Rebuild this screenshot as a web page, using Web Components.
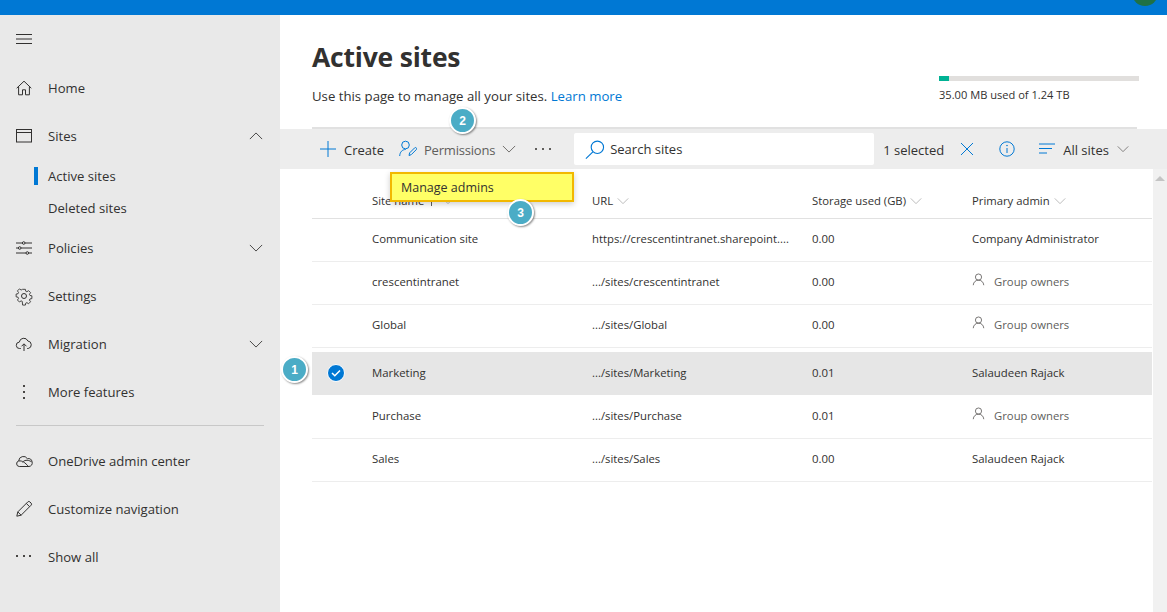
<!DOCTYPE html>
<html lang="en">
<head>
<meta charset="utf-8">
<title>Active sites</title>
<style>
  html, body { margin: 0; height: 100%; overflow: hidden; }
  body { font-family: "Open Sans", "Liberation Sans", sans-serif; color: #323130; background: #fff; }
</style>
</head>
<body>
<sp-shell>
  <sp-nav slot="nav"></sp-nav>
  <sp-header slot="main"></sp-header>
  <sp-toolbar slot="main"></sp-toolbar>
  <sp-table slot="main"></sp-table>
</sp-shell>

<script>
// stroke icons, all on a 16 box
const ICONS = {
  menu: '<path d="M0 3.500h16M0 8h16M0 12.500h16"/>',
  home: '<path d="M.7 8.200 8 1.200l7.300 7M2.600 6.600v8.200h3.900v-5h3v5h3.900V6.600"/>',
  sites: '<rect x=".5" y="1.500" width="15" height="12.500"/><path d="M.5 4.500h15"/>',
  policies: '<path d="M0 3h6.500M9 3h7M0 8h2.500M5 8h11M0 13h10M12.500 13H16"/><circle cx="7.700" cy="3" r="1.300"/><circle cx="3.700" cy="8" r="1.300"/><circle cx="11.300" cy="13" r="1.300"/>',
  settings: '<circle cx="8" cy="8" r="2.500"/><path d="M6.400.6h3.200l.4 2.200 1.300.6 1.900-1.300 2.300 2.300-1.300 1.900.6 1.300 2.200.4v3.200l-2.200.4-.6 1.300 1.300 1.900-2.300 2.300-1.900-1.300-1.300.6-.4 2.200H6.400L6 14.400l-1.300-.6-1.900 1.300L.5 12.800l1.300-1.900-.6-1.300L-1 9.200V6l2.200-.4.600-1.300L.5 2.400 2.800.1l1.900 1.300L6 .8z" transform="translate(1 .8) scale(.875)"/>',
  migration: '<path d="M4.800 12.500H3.700a3.200 3.200 0 0 1-.4-6.400A4.500 4.500 0 0 1 11.900 5a3.800 3.800 0 0 1 .3 7.500h-1M8 15V8M5.500 10.300 8 7.800l2.500 2.500"/>',
  onedrive: '<path d="M3.300 13.500a2.800 2.800 0 0 1-.6-5.500A4.700 4.700 0 0 1 11.400 5.700a3.900 3.900 0 0 1 1.600 7.800zM2.700 8c3.700-.6 6.300 1.600 9.800 5.500M6.500 9.300c2-2.200 4.300-2.900 9-.7"/>',
  pencil: '<path d="M.8 15.200l1-4.300L11.800.9a1.500 1.500 0 0 1 2.100 0l1.200 1.200a1.500 1.500 0 0 1 0 2.100L5.100 14.200zM1.800 10.900l3.300 3.300M10.300 2.400l3.300 3.300"/>',
  plus: '<path d="M8 0v16M0 8h16"/>',
  close: '<path d="M1 2l12 12M13 2 1 14"/>',
  search: '<circle cx="11" cy="6.500" r="5.500"/><path d="M7 10.500.8 16.500"/>',
  info: '<circle cx="8" cy="8" r="7.200"/><path d="M8 7v5"/><circle cx="8" cy="4.600" r=".4"/>',
  lines: '<path d="M0 3h16M0 7.500h13M0 12h8"/>',
  person: '<circle cx="8" cy="5" r="3.800"/><path d="M1.500 15c.3-3.800 3-6.200 6.500-6.200s6.200 2.400 6.500 6.200"/>',
  chevdown: '<path d="M1 4.500 8 11.500l7-7"/>',
  chevup: '<path d="M1 11.500 8 4.500l7 7"/>'
};

// <sp-icon name size color>
class SpIcon extends HTMLElement {
  connectedCallback() {
    const size = this.getAttribute("size") || 16;
    const color = this.getAttribute("color") || "#323130";
    const sw = this.getAttribute("sw") || 1;
    this.attachShadow({ mode: "open" }).innerHTML = `
      <style>:host{display:inline-flex;flex:none;width:${size}px;height:${size}px}svg{display:block;overflow:visible}</style>
      <svg width="${size}" height="${size}" viewBox="0 0 16 16" fill="none" stroke="${color}" stroke-width="${sw}">${ICONS[this.getAttribute("name")] || ""}</svg>`;
  }
}
customElements.define("sp-icon", SpIcon);

// numbered callout laid over the screenshot
class SpBadge extends HTMLElement {
  constructor() {
    super();
    this.attachShadow({ mode: "open" }).innerHTML = `
      <style>
        :host{position:absolute;z-index:5;width:23px;height:23px;box-sizing:content-box;border:2px solid #fff;border-radius:50%;
          background:#4bacc6;box-shadow:1px 1px 2px rgba(0,0,0,.45);color:#fff;display:flex;align-items:center;justify-content:center;
          font:bold 12px "Liberation Sans",sans-serif}
      </style><slot></slot>`;
  }
}
customElements.define("sp-badge", SpBadge);

class SpShell extends HTMLElement {
  constructor() {
    super();
    this.attachShadow({ mode: "open" }).innerHTML = `
      <style>
        :host{display:grid;grid-template-columns:280px 1fr;grid-template-rows:15px 1fr;height:612px;width:1167px;position:relative;overflow:hidden}
        .top{grid-column:1 / 3;background:#0078d4;position:relative}
        .avatar{position:absolute;left:1132px;top:-20px;width:26px;height:26px;border-radius:50%;background:#1f7145}
        .main{display:flex;flex-direction:column;min-width:0}
      </style>
      <div class="top"><div class="avatar"></div></div>
      <slot name="nav"></slot>
      <div class="main"><slot name="main"></slot></div>`;
  }
}
customElements.define("sp-shell", SpShell);

class SpNavItem extends HTMLElement {
  connectedCallback() {
    const icon = this.getAttribute("icon");
    const chev = this.getAttribute("chevron");
    const active = this.hasAttribute("active");
    const sub = this.hasAttribute("sub");
    let glyph = "";
    if (icon === "vdots") glyph = '<span class="vd"><i></i><i></i><i></i></span>';
    else if (icon === "hdots") glyph = '<span class="hd"><i></i><i></i><i></i></span>';
    else if (icon) glyph = `<sp-icon name="${icon}"></sp-icon>`;
    this.attachShadow({ mode: "open" }).innerHTML = `
      <style>
        :host{display:flex;align-items:center;height:${sub ? 32 : 48}px;padding-left:16px;padding-right:16px;position:relative;font-size:13.100px;color:#323130}
        .ic{width:32px;display:flex;align-items:center;flex:none}
        .t{flex:1}
        .bar{position:absolute;left:34px;top:7px;width:4px;height:18px;background:#0078d4}
        .vd{display:flex;flex-direction:column;gap:4px;margin-left:7px}
        .hd{display:flex;gap:4.500px;margin-top:-2px}
        i{display:block;width:2px;height:2px;background:#484644}
      </style>
      ${active ? '<div class="bar"></div>' : ""}
      <div class="ic">${glyph}</div>
      <div class="t"><slot></slot></div>
      ${chev ? `<sp-icon name="chev${chev}" size="14" style="margin-right:1px"></sp-icon>` : ""}`;
  }
}
customElements.define("sp-nav-item", SpNavItem);

class SpNav extends HTMLElement {
  constructor() {
    super();
    this.attachShadow({ mode: "open" }).innerHTML = `
      <style>
        :host{display:block;background:#e9e9e9}
        .burger{height:48px;padding-left:16px;display:flex;align-items:center;margin-bottom:1px}
        hr{border:0;border-top:1px solid #c8c8c8;margin:9px 16px 11px}
      </style>
      <div class="burger"><sp-icon name="menu"></sp-icon></div>
      <sp-nav-item icon="home">Home</sp-nav-item>
      <sp-nav-item icon="sites" chevron="up">Sites</sp-nav-item>
      <sp-nav-item sub active>Active sites</sp-nav-item>
      <sp-nav-item sub>Deleted sites</sp-nav-item>
      <sp-nav-item icon="policies" chevron="down">Policies</sp-nav-item>
      <sp-nav-item icon="settings">Settings</sp-nav-item>
      <sp-nav-item icon="migration" chevron="down">Migration</sp-nav-item>
      <sp-nav-item icon="vdots">More features</sp-nav-item>
      <hr>
      <sp-nav-item icon="onedrive">OneDrive admin center</sp-nav-item>
      <sp-nav-item icon="pencil">Customize navigation</sp-nav-item>
      <sp-nav-item icon="hdots">Show all</sp-nav-item>`;
  }
}
customElements.define("sp-nav", SpNav);

class SpHeader extends HTMLElement {
  constructor() {
    super();
    this.attachShadow({ mode: "open" }).innerHTML = `
      <style>
        :host{display:flex;justify-content:space-between;height:112px;margin:0 30px 0 32px;border-bottom:2px solid #e1e1e1;flex:none}
        h1{margin:24px 0 0;font-size:26.500px;line-height:36px;font-weight:700;color:#323130;letter-spacing:-.2px}
        p{margin:12px 0 0;font-size:13.200px;line-height:18px;color:#323130}
        a{color:#0078d4;text-decoration:none}
        .usage{width:200px;margin-right:-2px;padding-top:61px;font-size:11.100px;color:#323130}
        .track{height:5px;background:#e1dfdd;margin-bottom:6px}
        .fill{width:10px;height:5px;background:#00b294}
      </style>
      <div>
        <h1>Active sites</h1>
        <p>Use this page to manage all your sites. <a>Learn more</a></p>
      </div>
      <div class="usage">
        <div class="track"><div class="fill"></div></div>
        35.00 MB used of 1.24 TB
      </div>`;
  }
}
customElements.define("sp-header", SpHeader);

class SpToolbar extends HTMLElement {
  constructor() {
    super();
    this.attachShadow({ mode: "open" }).innerHTML = `
      <style>
        :host{display:flex;align-items:center;height:40px;flex:none;background:#ededed;padding-left:40px;font-size:13px;color:#323130;position:relative}
        .btn{display:flex;align-items:center}
        span{margin-top:2px}
        .muted{color:#605e5c;letter-spacing:-.2px}
        .dots{display:flex;gap:5px;margin-left:19px}
        .dots i{display:block;width:2px;height:2px;background:#605e5c}
        .search{width:300px;height:32px;background:#fff;border-radius:2px;display:flex;align-items:center;box-sizing:border-box;padding-left:11px;margin-left:23px;color:#323130;flex:none}
        .search span{margin-top:0}
      </style>
      <div class="btn"><sp-icon name="plus" color="#0078d4"></sp-icon><span style="margin-left:8px">Create</span></div>
      <div class="btn" style="margin-left:15px">
        <svg width="18" height="18" viewBox="0 0 18 18" fill="none" stroke="#0078d4" stroke-width="1"><circle cx="6.500" cy="5" r="3.800"/><path d="M.7 16c.2-4 2.500-6.500 6-6.500M10 15.500l.6-2.600 5-5a1.200 1.200 0 0 1 1.700 1.700l-5 5z"/></svg>
        <span class="muted" style="margin-left:7px">Permissions</span>
        <sp-icon name="chevdown" size="14" color="#605e5c" style="margin-left:7px"></sp-icon>
      </div>
      <div class="dots"><i></i><i></i><i></i></div>
      <div class="search"><sp-icon name="search" size="18" color="#0078d4"></sp-icon><span style="margin-left:7px">Search sites</span></div>
      <span style="margin-left:9px">1 selected</span>
      <sp-icon name="close" size="16" color="#0078d4" style="margin-left:16px"></sp-icon>
      <sp-icon name="info" size="16" color="#0078d4" style="margin-left:23px"></sp-icon>
      <sp-icon name="lines" size="16" color="#0078d4" style="margin-left:24px"></sp-icon>
      <span style="margin-left:8px">All sites</span>
      <sp-icon name="chevdown" size="12" color="#605e5c" style="margin-left:8px"></sp-icon>`;
  }
}
customElements.define("sp-toolbar", SpToolbar);

class SpRow extends HTMLElement {
  connectedCallback() {
    const admin = this.getAttribute("admin");
    const group = admin === "Group owners";
    const selected = this.hasAttribute("selected");
    this.attachShadow({ mode: "open" }).innerHTML = `
      <style>
        :host{display:grid;grid-template-columns:60px 220px 220px 160px 1fr;align-items:center;
          height:${selected ? 41 : 38}px;padding-bottom:${selected ? 2 : 4}px;border-bottom:${selected ? 0 : 1}px solid #ededed;font-size:11.400px;color:#323130;
          ${selected ? "background:#e6e6e6;margin:4px 0 1px;" : ""}}
        .check{width:16px;height:16px;border-radius:50%;background:#0078d4;border:1px solid #fff;display:flex;align-items:center;justify-content:center;margin-left:15px}
        .admin{display:flex;align-items:center}
        .url{font-size:11.300px}
        .group{color:#605e5c;font-size:11.300px}
        div{white-space:nowrap}
      </style>
      <div>${selected ? '<div class="check"><svg width="10" height="8" viewBox="0 0 10 8" fill="none" stroke="#fff" stroke-width="1.500"><path d="M1 4l2.800 2.800L9 1.500"/></svg></div>' : ""}</div>
      <div>${this.getAttribute("name")}</div>
      <div class="url">${this.getAttribute("url")}</div>
      <div>${this.getAttribute("size")}</div>
      <div class="admin${group ? " group" : ""}">${group ? '<sp-icon name="person" size="13" color="#5a5856" style="margin-right:9px;margin-top:-3px"></sp-icon>' : ""}${admin}</div>`;
  }
}
customElements.define("sp-row", SpRow);

const SITES = [
  ["Communication site", "https://crescentintranet.sharepoint....", "0.00", "Company Administrator"],
  ["crescentintranet", ".../sites/crescentintranet", "0.00", "Group owners"],
  ["Global", ".../sites/Global", "0.00", "Group owners"],
  ["Marketing", ".../sites/Marketing", "0.01", "Salaudeen Rajack", true],
  ["Purchase", ".../sites/Purchase", "0.01", "Group owners"],
  ["Sales", ".../sites/Sales", "0.00", "Salaudeen Rajack"]
];

class SpTable extends HTMLElement {
  constructor() {
    super();
    const rows = SITES.map(s =>
      `<sp-row name="${s[0]}" url="${s[1]}" size="${s[2]}" admin="${s[3]}"${s[4] ? " selected" : ""}></sp-row>`).join("");
    const head = (t, extra = "") => `<div class="h">${t}${extra}<sp-icon name="chevdown" size="12" color="#a6a6a6" style="margin-left:${extra ? 10 : 4}px"></sp-icon></div>`;
    this.attachShadow({ mode: "open" }).innerHTML = `
      <style>
        :host{display:flex;flex:1;position:relative}
        .list{margin-left:32px;width:840px}
        .head{display:grid;grid-template-columns:60px 220px 220px 160px 1fr;height:50px;box-sizing:border-box;align-items:end;border-bottom:1px solid #e1e1e1;font-size:11.300px;padding-bottom:10px}
        .h{display:flex;align-items:center;white-space:nowrap}
        .sep{width:1px;height:10px;background:#605e5c;margin-left:7px}
        .scroll{position:absolute;right:0;top:0;bottom:0;width:14px;background:#f1f1f1;display:flex;justify-content:center;padding-top:6px;box-sizing:border-box}
        .menu{position:absolute;z-index:4;left:110px;top:3px;width:184px;height:30px;box-sizing:border-box;background:#ffff66;border:2px solid #f2b800;
          display:flex;align-items:center;padding-left:9px;font-size:12.500px;box-shadow:0 2px 6px rgba(0,0,0,.2)}
      </style>
      <div class="list">
        <div class="head"><div></div>${head("Site name", '<span class="sep"></span>')}${head("URL")}${head("Storage used (GB)")}${head("Primary admin")}</div>
        ${rows}
      </div>
      <div class="scroll"><svg width="10" height="6" viewBox="0 0 10 6"><path d="M0 6 5 1l5 5z" fill="#c4c4c4"/></svg></div>
      <div class="menu">Manage admins</div>
      <sp-badge style="left:1px;top:187px">1</sp-badge>
      <sp-badge style="left:169px;top:-62px">2</sp-badge>
      <sp-badge style="left:227px;top:30px">3</sp-badge>`;
  }
}
customElements.define("sp-table", SpTable);
</script>
</body>
</html>
